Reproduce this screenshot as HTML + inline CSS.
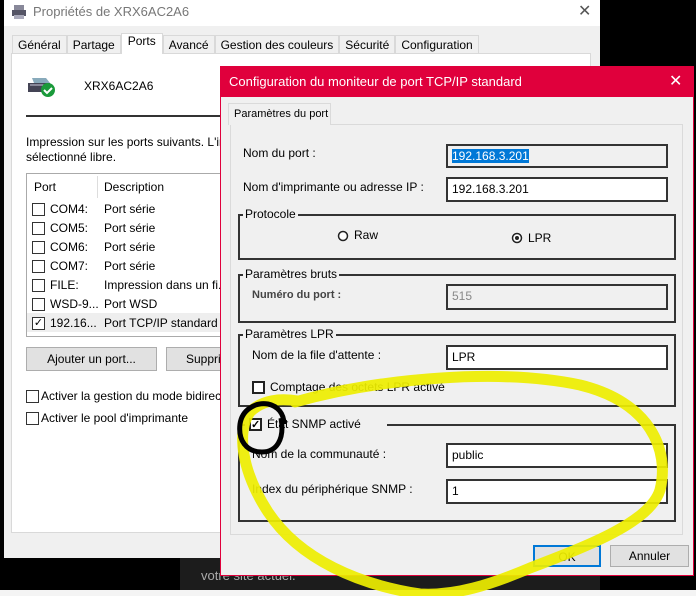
<!DOCTYPE html>
<html><head><meta charset="utf-8"><style>
*{box-sizing:border-box;margin:0;padding:0}
body{width:696px;height:596px;background:#000;position:relative;overflow:hidden;font-family:"Liberation Sans",sans-serif;font-size:12px;color:#000}
.a{position:absolute;white-space:nowrap}
.cb{position:absolute;width:13px;height:13px;border:1px solid #333;background:#fff}
.inp{position:absolute;border:2px solid #333;background:#fff;padding:3px 4px;font-size:12px}
.grp{position:absolute;border:2px solid #333}
.gl{position:absolute;background:#f0f0f0;padding:0 2px;top:-9px;left:3px;white-space:nowrap}
.btn{position:absolute;background:#e1e1e1;border:1px solid #adadad;text-align:center}
</style></head><body>
<div class="a" style="left:4px;top:0;width:596px;height:558px;background:#f0f0f0"></div>
<div class="a" style="left:4px;top:0;width:596px;height:26px;background:#fff"></div>
<svg class="a" style="left:11px;top:4px" width="16" height="16"><rect x="3" y="1" width="10" height="5" fill="#889"/><rect x="1" y="6" width="14" height="6" fill="#556"/><rect x="3" y="11" width="10" height="4" fill="#aab"/></svg>
<div class="a" style="left:33px;top:4px;color:#777;font-size:13px">Propriétés de XRX6AC2A6</div>
<div class="a" style="left:578px;top:1px;color:#555;font-size:16px">✕</div>
<div class="a" style="left:11px;top:53px;width:580px;height:480px;background:#fff;border:1px solid #d9d9d9"></div>
<div class="a" style="left:12px;top:35px;height:19px;display:flex;font-size:12px">
<div style="border:1px solid #d9d9d9;padding:2px 5px;background:#f0f0f0">Général</div>
<div style="border:1px solid #d9d9d9;padding:2px 5px;background:#f0f0f0">Partage</div>
<div style="border:1px solid #d9d9d9;border-bottom:none;padding:0 6px;background:#fff;margin-top:-2px;height:21px">Ports</div>
<div style="border:1px solid #d9d9d9;padding:2px 5px;background:#f0f0f0">Avancé</div>
<div style="border:1px solid #d9d9d9;padding:2px 5px;background:#f0f0f0">Gestion des couleurs</div>
<div style="border:1px solid #d9d9d9;padding:2px 5px;background:#f0f0f0">Sécurité</div>
<div style="border:1px solid #d9d9d9;padding:2px 5px;background:#f0f0f0">Configuration</div>
</div>
<svg class="a" style="left:26px;top:74px" width="32" height="26"><path d="M6 4h14l4 5H8z" fill="#8ab"/><path d="M2 9h22v9H2z" fill="#445"/><path d="M4 11h18" stroke="#ccd" stroke-width="1"/><circle cx="22" cy="16" r="7" fill="#1a9a3a"/><path d="M18 16l3 3 5-5" stroke="#fff" stroke-width="2" fill="none"/></svg>
<div class="a" style="left:84px;top:79px">XRX6AC2A6</div>
<div class="a" style="left:26px;top:115px;width:200px;height:2px;background:#333"></div>
<div class="a" style="left:26px;top:135px;line-height:15px">Impression sur les ports suivants. L'in<br>sélectionné libre.</div>
<div class="a" style="left:26px;top:173px;width:200px;height:164px;border:1px solid #aaa;background:#fff"></div>
<div class="a" style="left:34px;top:180px">Port</div><div class="a" style="left:97px;top:176px;width:1px;height:22px;background:#ddd"></div>
<div class="a" style="left:104px;top:180px">Description</div>
<div class="a" style="left:27px;top:313px;width:193px;height:19px;background:#eee"></div>
<div class="cb" style="left:32px;top:203px"></div><div class="a" style="left:50px;top:202px">COM4:</div><div class="a" style="left:104px;top:202px">Port série</div>
<div class="cb" style="left:32px;top:222px"></div><div class="a" style="left:50px;top:221px">COM5:</div><div class="a" style="left:104px;top:221px">Port série</div>
<div class="cb" style="left:32px;top:241px"></div><div class="a" style="left:50px;top:240px">COM6:</div><div class="a" style="left:104px;top:240px">Port série</div>
<div class="cb" style="left:32px;top:260px"></div><div class="a" style="left:50px;top:259px">COM7:</div><div class="a" style="left:104px;top:259px">Port série</div>
<div class="cb" style="left:32px;top:279px"></div><div class="a" style="left:50px;top:278px">FILE:</div><div class="a" style="left:104px;top:278px">Impression dans un fi.</div>
<div class="cb" style="left:32px;top:298px"></div><div class="a" style="left:50px;top:297px">WSD-9...</div><div class="a" style="left:104px;top:297px">Port WSD</div>
<div class="cb" style="left:32px;top:317px;font-size:11px;line-height:11px;text-align:center">✓</div><div class="a" style="left:50px;top:316px">192.16...</div><div class="a" style="left:104px;top:316px">Port TCP/IP standard</div>
<div class="btn" style="left:26px;top:347px;width:131px;height:24px;line-height:22px">Ajouter un port...</div>
<div class="btn" style="left:166px;top:347px;width:60px;height:24px;line-height:22px;text-align:left;padding-left:19px">Suppri</div>
<div class="cb" style="left:26px;top:390px"></div><div class="a" style="left:41px;top:389px">Activer la gestion du mode bidirec</div>
<div class="cb" style="left:26px;top:412px"></div><div class="a" style="left:41px;top:411px">Activer le pool d'imprimante</div>
<div class="a" style="left:180px;top:558px;width:420px;height:32px;background:#1c1c1c"></div>
<div class="a" style="left:201px;top:568px;color:#aaa;font-size:13px">votre site actuel.</div>
<div class="a" style="left:0;top:590px;width:696px;height:6px;background:#f4f4f4"></div>
<div class="a" style="left:220px;top:66px;width:474px;height:510px;background:#f0f0f0;border:1px solid #e0003c"></div>
<div class="a" style="left:220px;top:66px;width:474px;height:31px;background:#e0003c"></div>
<div class="a" style="left:229px;top:74px;color:#fff;font-size:13px">Configuration du moniteur de port TCP/IP standard</div>
<div class="a" style="left:669px;top:71px;color:#fff;font-size:16px">✕</div>
<div class="a" style="left:230px;top:124px;width:453px;height:411px;background:#f0f0f0;border:1px solid #dadada"></div>
<div class="a" style="left:228px;top:103px;width:103px;height:22px;background:#f0f0f0;border:1px solid #dadada;border-bottom:none;padding:4px 5px;font-size:11px;white-space:nowrap">Paramètres du port</div>
<div class="a" style="left:243px;top:146px">Nom du port :</div>
<div class="inp" style="left:446px;top:144px;width:222px;height:24px;background:#f0f0f0"><span style="background:#0078d7;color:#fff">192.168.3.201</span></div>
<div class="a" style="left:243px;top:180px">Nom d'imprimante ou adresse IP :</div>
<div class="inp" style="left:446px;top:177px;width:222px;height:25px">192.168.3.201</div>
<div class="grp" style="left:238px;top:214px;width:438px;height:46px"><div class="gl">Protocole</div></div>
<svg class="a" style="left:337px;top:230px" width="12" height="12"><circle cx="6" cy="6" r="4.5" stroke="#222" stroke-width="1.5" fill="#fff"/></svg>
<div class="a" style="left:354px;top:228px">Raw</div>
<svg class="a" style="left:511px;top:232px" width="12" height="12"><circle cx="6" cy="6" r="4.5" stroke="#222" stroke-width="1.5" fill="#fff"/><circle cx="6" cy="6" r="2" fill="#222"/></svg>
<div class="a" style="left:528px;top:231px">LPR</div>
<div class="grp" style="left:238px;top:274px;width:438px;height:49px"><div class="gl">Paramètres bruts</div></div>
<div class="a" style="left:252px;top:289px;color:#444;font-weight:bold;font-size:11px">Numéro du port :</div>
<div class="inp" style="left:446px;top:284px;width:222px;height:26px;background:#f0f0f0;color:#888">515</div>
<div class="grp" style="left:238px;top:334px;width:438px;height:73px"><div class="gl">Paramètres LPR</div></div>
<div class="a" style="left:252px;top:348px">Nom de la file d'attente :</div>
<div class="inp" style="left:446px;top:345px;width:222px;height:25px">LPR</div>
<div class="cb" style="left:252px;top:381px;border:2px solid #222"></div><div class="a" style="left:270px;top:380px">Comptage des octets LPR activé</div>
<div class="grp" style="left:238px;top:424px;width:438px;height:98px"></div>
<div class="a" style="left:245px;top:415px;width:142px;height:18px;background:#f0f0f0"></div>
<div class="cb" style="left:249px;top:418px;border:2px solid #222;font-size:11px;line-height:10px;text-align:center;font-weight:bold">✓</div>
<div class="a" style="left:267px;top:417px">État SNMP activé</div>
<div class="a" style="left:252px;top:447px">Nom de la communauté :</div>
<div class="inp" style="left:446px;top:443px;width:222px;height:25px">public</div>
<div class="a" style="left:252px;top:482px">Index du périphérique SNMP :</div>
<div class="inp" style="left:446px;top:479px;width:222px;height:25px">1</div>
<div class="btn" style="left:533px;top:545px;width:68px;height:22px;line-height:20px;border:2px solid #0078d7">OK</div>
<div class="btn" style="left:610px;top:545px;width:79px;height:22px;line-height:20px">Annuler</div>
<svg class="a" style="left:0;top:0" width="696" height="596">
<path d="M295 402 C380 378 500 368 580 385 C650 402 670 450 660 490 C650 522 590 545 530 568 C490 585 455 596 420 594 C360 585 300 560 268 512 C242 472 236 432 250 412 C262 400 280 398 298 401" stroke="#eeee00" stroke-width="11" fill="none" stroke-linecap="round" stroke-opacity="0.92"/>
<path d="M281 418 C285 440 276 452 262 452 C246 452 238 440 240 424 C242 410 255 402 268 404 C278 406 284 414 284 424" stroke="#000" stroke-width="5" fill="none"/>
</svg>
</body></html>
